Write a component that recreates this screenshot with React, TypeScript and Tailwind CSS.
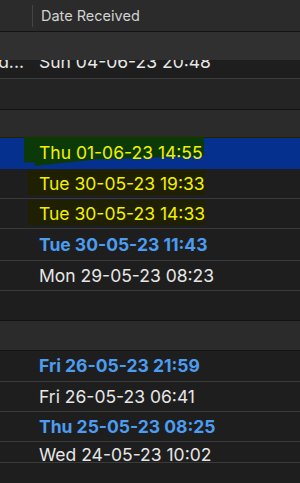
import React from "react";

type Row = { text: string; kind: "sel" | "yellow" | "blue" | "white" };

const font = { fontFamily: "Inter, 'Noto Sans', sans-serif" };

function DataRow({ text, kind, h = "h-[30px]" }: Row & { h?: string }) {
  const color =
    kind === "blue"
      ? "text-[#4c9cf0] font-bold"
      : kind === "white"
      ? "text-[#e6e6e6]"
      : "text-[#f2f200]";
  return (
    <div className={`relative ${h} bg-[#1e1e1e] border-b border-[#3a3a3a] flex items-center overflow-hidden shrink-0`}>
      {kind === "yellow" && (
        <div className="absolute left-[28px] top-[1px] w-[177px] h-[25px] bg-[#1f1f02]" />
      )}
      <span className={`relative pl-[39px] text-[17.5px] leading-none ${color}`}>{text}</span>
    </div>
  );
}

export default function App() {
  return (
    <div className="w-[300px] h-[483px] bg-[#1e1e1e] overflow-hidden flex flex-col" style={font}>
      {/* column header */}
      <div className="h-[32px] bg-[#2b2b2b] border-b border-[#141414] flex items-center shrink-0">
        <div className="w-[33px] h-[22px] border-r border-[#454545] shrink-0" />
        <span className="pl-[8px] text-[14.5px] text-[#d2d2d2]">Date Received</span>
      </div>
      {/* group band */}
      <div className="h-[28px] bg-[#303030] shrink-0" />
      {/* partially scrolled row */}
      <div className="h-[19px] bg-[#1e1e1e] border-b border-[#3c3c3c] relative overflow-hidden shrink-0">
        <span className="absolute right-[276px] top-[-7px] text-[17.5px] leading-none text-[#e6e6e6] whitespace-nowrap">
          Received d...
        </span>
        <span className="absolute left-[39px] top-[-7px] text-[17.5px] leading-none text-[#e6e6e6] whitespace-nowrap">
          Sun 04-06-23 20:48
        </span>
      </div>
      <div className="h-[31px] bg-[#242424] border-b border-[#121212] shrink-0" />
      {/* group band */}
      <div className="h-[27px] bg-[#2b2b2b] border-b border-[#2e2e0c] shrink-0" />
      {/* selected row */}
      <div className="relative h-[32px] bg-[#1e1e1e] flex items-center overflow-hidden shrink-0">
        <div className="absolute inset-x-0 top-[1px] bottom-0 bg-[#06308e]" />
        <div
          className="absolute left-[24px] top-0 w-[180px] h-[29px] bg-[#0b3a08]"
          style={{ clipPath: "polygon(0 0, 100% 0, 100% 65%, 40% 78%, 6% 100%, 6% 88%, 0 88%)" }}
        />
        <span className="relative pl-[39px] text-[17.5px] leading-none text-[#f2f200]">Thu 01-06-23 14:55</span>
      </div>
      <DataRow text="Tue 30-05-23 19:33" kind="yellow" />
      <DataRow text="Tue 30-05-23 14:33" kind="yellow" />
      <DataRow text="Tue 30-05-23 11:43" kind="blue" h="h-[32px]" />
      <DataRow text="Mon 29-05-23 08:23" kind="white" />
      <div className="h-[30px] bg-[#1e1e1e] border-b border-[#121212] shrink-0" />
      <div className="h-[30px] bg-[#2b2b2b] border-b border-[#141414] shrink-0" />
      <DataRow text="Fri 26-05-23 21:59" kind="blue" h="h-[31px]" />
      <DataRow text="Fri 26-05-23 06:41" kind="white" />
      <DataRow text="Thu 25-05-23 08:25" kind="blue" />
      <div className="relative h-[21px] bg-[#1e1e1e] border-b border-[#3a3a3a] overflow-hidden shrink-0">
        <span className="absolute left-[39px] top-[4px] text-[17.5px] leading-none text-[#e6e6e6] whitespace-nowrap">Wed 24-05-23 10:02</span>
      </div>
      <div className="flex-1 bg-[#1e1e1e]" />
    </div>
  );
}
